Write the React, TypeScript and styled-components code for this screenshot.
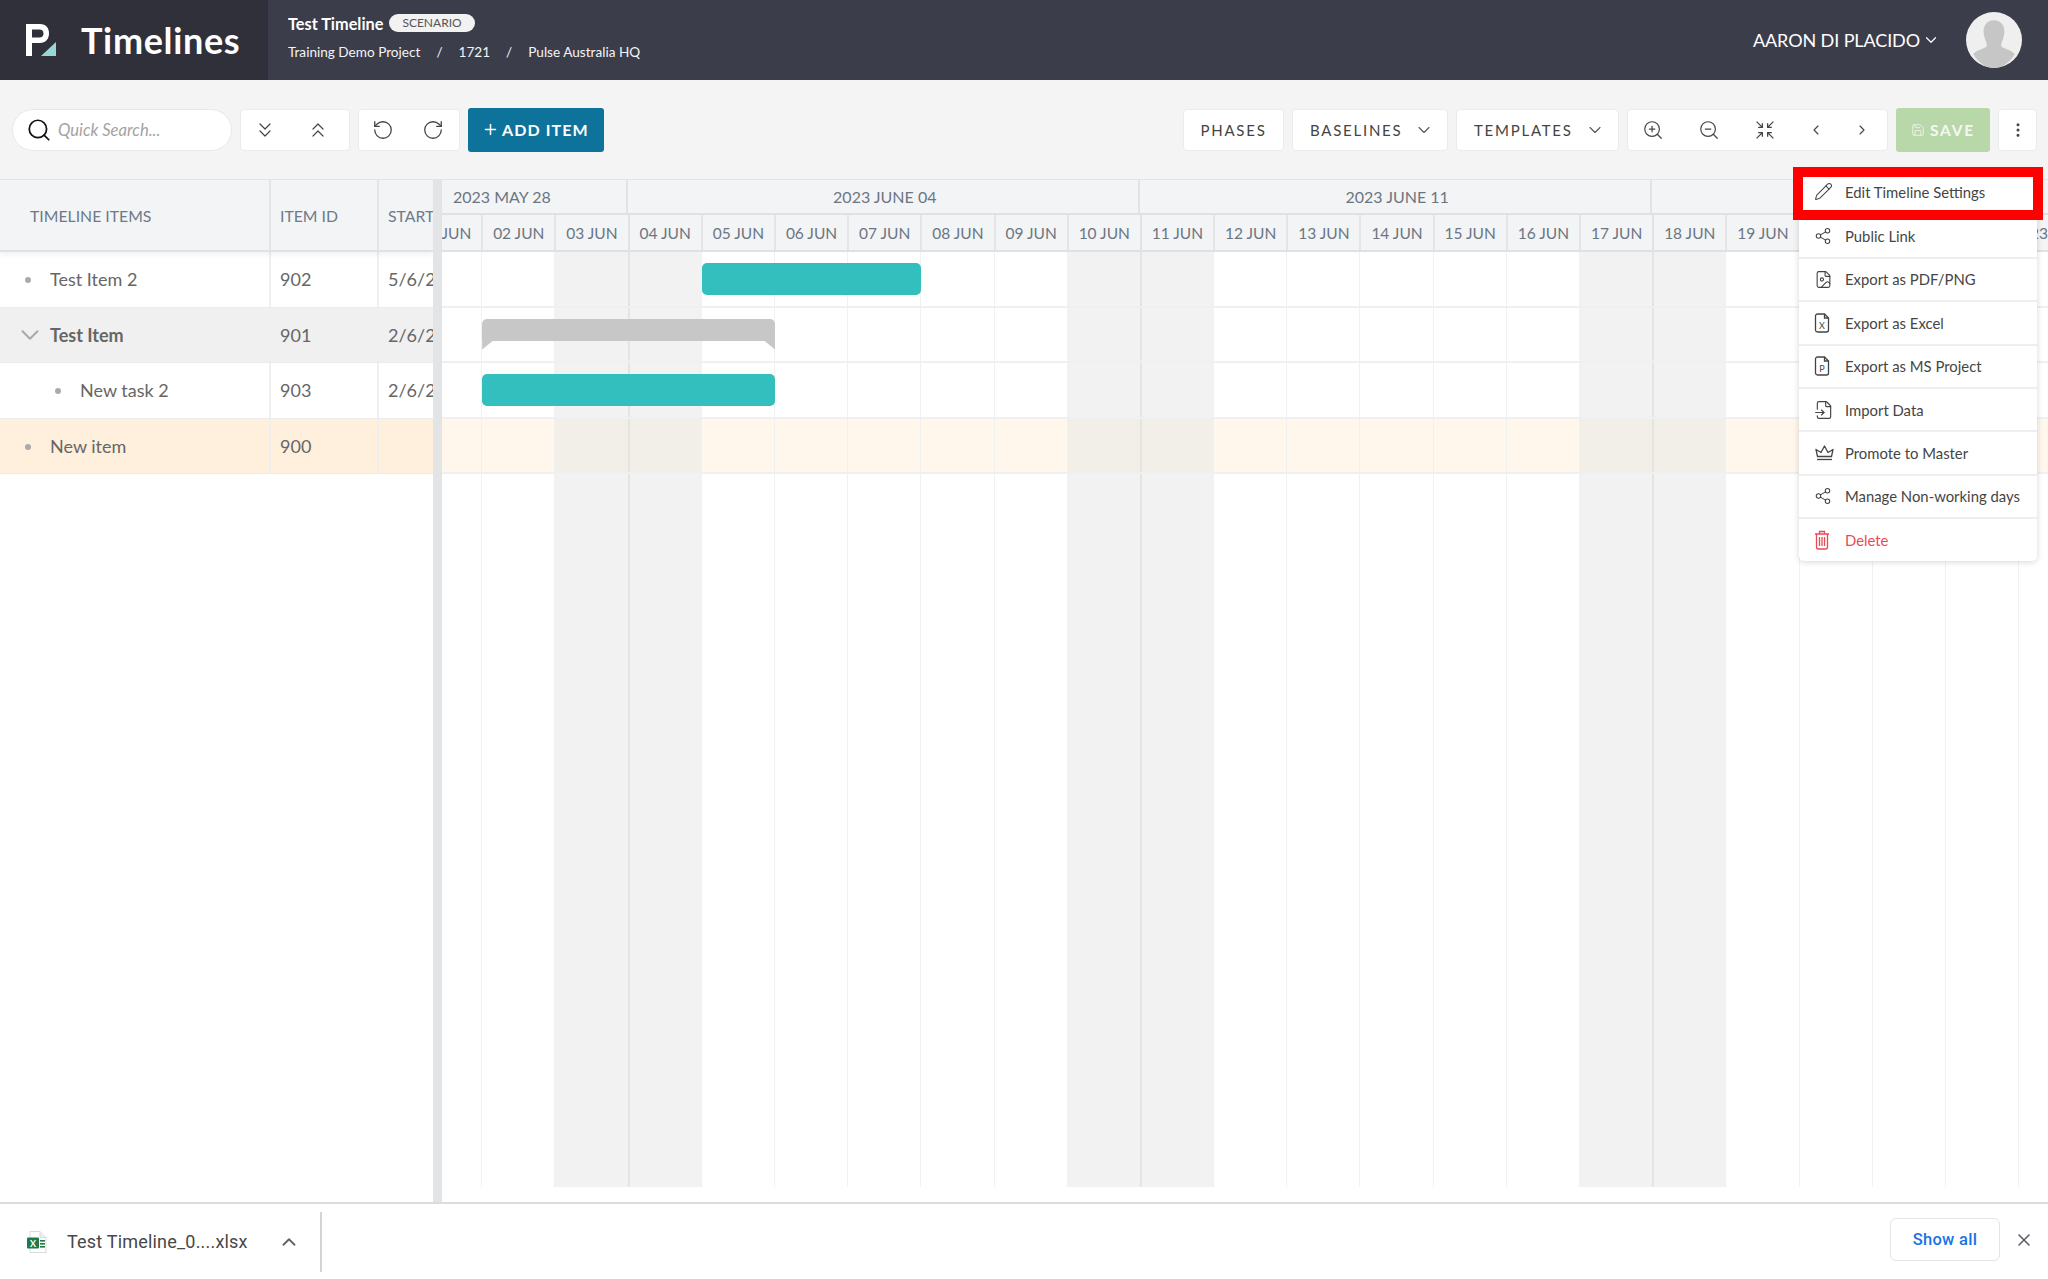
import React from "react";
import styled, { createGlobalStyle } from "styled-components";
import {
  Search, ChevronsDown, ChevronsUp, RotateCcw, RotateCw, Plus, ChevronDown, ChevronUp,
  ZoomIn, ZoomOut, ChevronLeft, ChevronRight, Save, MoreVertical, Pencil, Share2, FileImage, FileInput, X,
} from "lucide-react";

const DAY = 73.2;

const Global = createGlobalStyle`
  html, body { margin: 0; padding: 0; background: #fff; }
  body { font-family: Lato, "Liberation Sans", sans-serif; }
  * { box-sizing: border-box; }
`;

const Page = styled.div`
  position: relative;
  width: 2048px;
  height: 1279px;
  overflow: hidden;
  display: flex;
  flex-direction: column;
  background: #fff;
`;

/* ---------- header ---------- */
const Header = styled.header`
  height: 80px;
  flex: none;
  display: flex;
  align-items: stretch;
  background: #3b3d4b;
  color: #fff;
`;
const Brand = styled.div`
  width: 268px;
  background: #2f303a;
  display: flex;
  align-items: center;
  padding-left: 25px;
  gap: 24px;
`;
const BrandName = styled.div`
  font-size: 36px;
  font-weight: 700;
  letter-spacing: 0.65px;
  line-height: 1;
`;
const Titles = styled.div`
  padding: 14px 0 0 20px;
  display: flex;
  flex-direction: column;
  gap: 12px;
`;
const TitleRow = styled.div`
  display: flex;
  align-items: center;
  gap: 6px;
  height: 18px;
`;
const Title = styled.div`
  font-size: 16.300px;
  font-weight: 700;
`;
const Pill = styled.div`
  background: #f2f2f2;
  color: #555;
  border-radius: 9px;
  height: 18px;
  line-height: 18px;
  padding: 0 13px;
  font-size: 12px;
`;
const Crumbs = styled.div`
  display: flex;
  font-size: 13.600px;
  gap: 16px;
  color: #f4f4f4;
`;
const User = styled.div`
  margin-left: auto;
  display: flex;
  align-items: center;
  padding-right: 26px;
`;
const UserName = styled.div`
  font-size: 18px;
  letter-spacing: -0.1px;
  margin-right: 2px;
`;
const Avatar = styled.svg`
  width: 56px;
  height: 56px;
  margin-left: 26px;
`;

/* ---------- toolbar ---------- */
const Toolbar = styled.div`
  height: 99px;
  flex: none;
  background: #f4f4f4;
  display: flex;
  align-items: center;
  justify-content: space-between;
  padding: 0 11px 0 12px;
`;
const ToolGroup = styled.div`
  display: flex;
  align-items: center;
  gap: 8px;
`;
const SearchBox = styled.div`
  width: 220px;
  height: 42px;
  background: #fff;
  border: 1px solid #e9e9e9;
  border-radius: 21px;
  display: flex;
  align-items: center;
  padding-left: 13px;
  gap: 6px;
  color: #111;
`;
const SearchText = styled.span`
  font-size: 16.600px;
  font-style: italic;
  color: #a3a3a3;
`;
const ToolBox = styled.div<{ $w: number; $pad?: number }>`
  width: ${(p) => p.$w}px;
  height: 42px;
  background: #fff;
  border: 1px solid #ebebeb;
  border-radius: 4px;
  display: flex;
  align-items: center;
  justify-content: ${(p) => (p.$pad ? "flex-start" : "center")};
  padding-left: ${(p) => p.$pad ?? 0}px;
  color: #444;
  font-size: 15px;
  letter-spacing: 1.75px;
`;
const IconSpot = styled.span<{ $at: number }>`
  position: absolute;
  left: ${(p) => p.$at}px;
  top: 50%;
  transform: translate(-50%, -50%);
  display: flex;
`;
const IconBox = styled(ToolBox)`
  position: relative;
`;
const AddButton = styled.div`
  width: 136px;
  height: 44px;
  background: #0d739b;
  border-radius: 3px;
  color: #fff;
  font-size: 16px;
  font-weight: 700;
  letter-spacing: 1.1px;
  display: flex;
  align-items: center;
  padding-left: 14px;
  gap: 3px;
`;
const SaveButton = styled.div`
  width: 94px;
  height: 44px;
  background: #b9d8a9;
  border-radius: 3px;
  color: #f4f8f1;
  font-size: 15.500px;
  font-weight: 700;
  letter-spacing: 1.800px;
  display: flex;
  align-items: center;
  padding-left: 15px;
  gap: 5px;
`;
const Caret = styled.span`
  display: flex;
  margin-left: 12px;
  color: #555;
`;

/* ---------- main ---------- */
const Main = styled.div`
  flex: 1;
  min-height: 0;
  display: flex;
  border-top: 1px solid #e4e4e4;
`;
const LeftPanel = styled.div`
  width: 433px;
  flex: none;
  overflow: hidden;
`;
const Splitter = styled.div`
  width: 9px;
  flex: none;
  background: #e3e4e6;
`;
const LeftHead = styled.div`
  height: 72px;
  display: flex;
  background: #f3f4f5;
  border-bottom: 2px solid #e0e1e3;
  box-shadow: 0 3px 5px rgba(0, 0, 0, 0.05);
  position: relative;
  color: #6c7a8a;
  font-size: 15.800px;
`;
const HeadCell = styled.div<{ $w: number; $pl: number }>`
  width: ${(p) => p.$w}px;
  flex: none;
  padding-left: ${(p) => p.$pl}px;
  display: flex;
  align-items: center;
  border-right: 2px solid #e4e5e7;
  white-space: nowrap;
  overflow: hidden;
`;
const LeftRow = styled.div<{ $bg: string }>`
  height: 55.500px;
  display: flex;
  background: ${(p) => p.$bg};
  border-bottom: 1px solid #ececec;
  color: #666;
  font-size: 18px;
`;
const NameCell = styled.div<{ $indent: number; $bold?: boolean }>`
  width: 271px;
  flex: none;
  display: flex;
  align-items: center;
  border-right: 2px solid #efefef;
  padding-left: ${(p) => p.$indent}px;
  font-weight: ${(p) => (p.$bold ? 700 : 400)};
`;
const Bullet = styled.span`
  width: 6px;
  height: 6px;
  border-radius: 50%;
  background: #aaa;
  margin-right: 19px;
  position: relative;
  top: 1px;
`;
const Toggle = styled.span`
  display: flex;
  margin-left: -10.500px;
  margin-right: 5.500px;
  color: #a8a8a8;
`;
const ValueCell = styled.div<{ $w: number; $pl: number }>`
  width: ${(p) => p.$w}px;
  flex: none;
  padding-left: ${(p) => p.$pl}px;
  display: flex;
  align-items: center;
  white-space: nowrap;
  overflow: hidden;
  border-right: 2px solid #efefef;
`;

const Calendar = styled.div`
  flex: 1;
  min-width: 0;
  overflow: hidden;
  display: flex;
  flex-direction: column;
`;
const Track = styled.div`
  margin-left: -34px;
  width: ${23 * DAY}px;
  flex: 1;
  display: flex;
  flex-direction: column;
  padding-bottom: 15px;
`;
const WeekRow = styled.div`
  height: 35px;
  flex: none;
  display: flex;
  background: #f3f4f5;
  border-bottom: 2px solid #e0e1e3;
  color: #6b7683;
  font-size: 16px;
`;
const WeekCell = styled.div<{ $days: number; $left?: number }>`
  width: ${(p) => p.$days * DAY}px;
  flex: none;
  border-right: 2px solid #e2e3e5;
  display: flex;
  align-items: center;
  justify-content: ${(p) => (p.$left ? "flex-start" : "center")};
  padding-left: ${(p) => p.$left ?? 4}px;
`;
const DayRow = styled.div`
  height: 37px;
  flex: none;
  display: flex;
  background: #f3f4f5;
  border-bottom: 2px solid #e0e1e3;
  box-shadow: 0 3px 5px rgba(0, 0, 0, 0.05);
  position: relative;
  color: #6b7683;
  font-size: 15.500px;
`;
const DayHead = styled.div<{ $week: boolean }>`
  width: ${DAY}px;
  flex: none;
  display: flex;
  align-items: center;
  justify-content: center;
  border-left: ${(p) => (p.$week ? "2px solid #e2e3e5" : "2px solid #e4e5e7")};
  white-space: nowrap;
`;
const GridRow = styled.div<{ $bg?: string; $fill?: boolean }>`
  position: relative;
  display: flex;
  height: ${(p) => (p.$fill ? "auto" : "55.5px")};
  flex: ${(p) => (p.$fill ? 1 : "none")};
  background: ${(p) => p.$bg ?? "#fff"};
  border-bottom: ${(p) => (p.$fill ? "none" : "2px solid #f0f0f0")};
`;
const GridCell = styled.div<{ $week: boolean; $shade: string }>`
  width: ${DAY}px;
  flex: none;
  border-left: ${(p) => (p.$week ? "2px solid #e4e4e4" : "1px solid #f1f1f1")};
  background: ${(p) => p.$shade};
`;
const Bar = styled.div`
  position: absolute;
  top: 11px;
  height: 32px;
  border-radius: 5px;
  background: #33bfbd;
`;
const SummaryBar = styled.div`
  position: absolute;
  top: 11px;
  height: 22px;
  border-radius: 5px 5px 0 0;
  background: #c7c7c7;
  &::before,
  &::after {
    content: "";
    position: absolute;
    top: 22px;
    width: 11px;
    height: 9px;
    background: #c7c7c7;
  }
  &::before {
    left: 0;
    clip-path: polygon(0 0, 100% 0, 0 100%);
  }
  &::after {
    right: 0;
    clip-path: polygon(0 0, 100% 0, 100% 100%);
  }
`;

/* ---------- overflow menu ---------- */
const Menu = styled.div`
  position: absolute;
  top: 170px;
  right: 11px;
  width: 238px;
  background: #fff;
  border-radius: 5px;
  box-shadow: 0 1px 6px rgba(0, 0, 0, 0.16);
`;
const MenuItem = styled.div<{ $danger?: boolean; $first?: boolean }>`
  height: 43.400px;
  display: flex;
  align-items: center;
  padding-left: 15px;
  font-size: 14.850px;
  color: ${(p) => (p.$danger ? "#ea4a54" : "#454545")};
  border-top: ${(p) => (p.$first ? "none" : "2px solid #eeeeee")};
`;
const MenuIcon = styled.span`
  width: 31px;
  flex: none;
  display: flex;
  align-items: center;
`;
const RedMark = styled.div`
  position: absolute;
  top: 167px;
  left: 1793px;
  width: 250px;
  height: 53px;
  border: 10.500px solid #fe0000;
`;

/* ---------- download bar ---------- */
const DownloadBar = styled.div`
  height: 77px;
  flex: none;
  border-top: 2px solid #dcdcdc;
  display: flex;
  align-items: center;
  background: #fff;
  padding-left: 27px;
  font-family: Roboto, "Liberation Sans", sans-serif;
`;
const FileName = styled.div`
  font-size: 18px;
  color: #474747;
  letter-spacing: 0.2px;
  margin-left: 20px;
  width: 211px;
`;
const Arrow = styled.span`
  display: flex;
  color: #5f6368;
`;
const VLine = styled.div`
  width: 2px;
  height: 60px;
  background: #d4d4d4;
  margin-left: 20px;
`;
const ShowAll = styled.div`
  margin-left: auto;
  width: 110px;
  height: 43px;
  border: 1px solid #e2e4e8;
  border-radius: 6px;
  color: #1a73e8;
  font-size: 16.500px;
  font-weight: 500;
  letter-spacing: 0.3px;
  display: flex;
  align-items: center;
  justify-content: center;
  position: relative;
  top: -2px;
`;
const Close = styled.span`
  display: flex;
  margin: 0 14px 0 14px;
  color: #5f6368;
  position: relative;
  top: -2px;
`;

const days = Array.from({ length: 23 }, (_, i) => i + 1);
const isWeek = (d: number) => (d - 4) % 7 === 0;
const isOff = (d: number) => (d - 3) % 7 === 0 || (d - 4) % 7 === 0;
const barLeft = (d: number) => (d - 1) * DAY + 1;
const hiddenByMenu = (d: number) => d >= 20 && d <= 22;

const rows = [
  { name: "Test Item 2", id: "902", start: "5/6/2023", bg: "#fff", grid: "#fff", shade: "#f2f2f2", indent: 25, bar: { from: 5, n: 3 } },
  { name: "Test Item", id: "901", start: "2/6/2023", bg: "#f0f0f0", grid: "#fff", shade: "#f2f2f2", indent: 25, group: true, summary: { from: 2, n: 4 } },
  { name: "New task 2", id: "903", start: "2/6/2023", bg: "#fff", grid: "#fff", shade: "#f2f2f2", indent: 55, bar: { from: 2, n: 4 } },
  { name: "New item", id: "900", start: "", bg: "#ffefdd", grid: "#fff6ec", shade: "#f2eee8", indent: 25 },
];

const cells = (shade: string) =>
  days.map((d) => <GridCell key={d} $week={isWeek(d)} $shade={isOff(d) ? shade : "transparent"} />);

const PulseLogo = () => (
  <svg width="32" height="34" viewBox="0 0 32 34">
    <path d="M1 1h14c6 0 9 4 9 9.500S20.500 20 15 20H7v13H1z M7 6.500v8h7.500c2.500 0 4-1.500 4-4s-1.500-4-4-4z" fill="#fff" fillRule="evenodd" />
    <path d="M31 19v14H16z" fill="#97d8d5" />
  </svg>
);

const FitIcon = () => (
  <svg width="21" height="21" viewBox="0 0 20 20" fill="none" stroke="#444" strokeWidth="1.200">
    <path d="M2 2l5.500 5.500M7.500 3.500v4h-4" />
    <path d="M18 2l-5.500 5.500M12.500 3.500v4h4" />
    <path d="M2 18l5.500-5.500M7.500 16.500v-4h-4" />
    <path d="M18 18l-5.500-5.500M12.500 16.500v-4h4" />
  </svg>
);

const LetterFile = ({ letter }: { letter: string }) => (
  <svg width="16" height="20" viewBox="0 0 16 20" fill="none" stroke="#444" strokeWidth="1.300">
    <path d="M1.500 3a2 2 0 0 1 2-2h7l4 4v12a2 2 0 0 1-2 2h-9a2 2 0 0 1-2-2z" />
    <path d="M10.500 1v4h4" />
    <text x="8" y="15.500" textAnchor="middle" fontSize="9" fill="#444" stroke="none" fontFamily="Lato, sans-serif">{letter}</text>
  </svg>
);

const CrownIcon = () => (
  <svg width="21" height="18" viewBox="0 0 21 18" fill="none" stroke="#444" strokeWidth="1.300" strokeLinejoin="round">
    <path d="M3.500 12.500L2 5.500l5 3L10.500 2 14 8.500l5-3-1.500 7z" />
    <path d="M3 15.500h15" />
  </svg>
);

const TrashIcon = () => (
  <svg width="16" height="20" viewBox="0 0 16 20" fill="none" stroke="#ea4a54" strokeWidth="1.300">
    <path d="M1 4h14M5.500 4V1.500h5V4M2.500 4v13a2 2 0 0 0 2 2h7a2 2 0 0 0 2-2V4" />
    <path d="M5.500 7v9M8 7v9M10.500 7v9" />
  </svg>
);

const ExcelIcon = () => (
  <svg width="20" height="22" viewBox="0 0 20 22">
    <path d="M3 .5h10l6 6V21.500H3z" fill="#fff" stroke="#d9d9d9" />
    <path d="M13 .5v6h6" fill="#eee" stroke="#d9d9d9" />
    <rect x="13" y="9" width="5" height="1.600" fill="#1f7a45" />
    <rect x="13" y="12" width="5" height="1.600" fill="#1f7a45" />
    <rect x="13" y="15" width="5" height="1.600" fill="#1f7a45" />
    <rect x="0" y="6.500" width="12" height="11" rx="1" fill="#1f7a45" />
    <text x="6" y="15.500" textAnchor="middle" fontSize="9" fontWeight="700" fill="#fff" fontFamily="Lato, sans-serif">X</text>
  </svg>
);

export default function App() {
  return (
    <Page>
      <Global />
      <Header>
        <Brand>
          <PulseLogo />
          <BrandName>Timelines</BrandName>
        </Brand>
        <Titles>
          <TitleRow>
            <Title>Test Timeline</Title>
            <Pill>SCENARIO</Pill>
          </TitleRow>
          <Crumbs>
            <span>Training Demo Project</span>
            <span>/</span>
            <span>1721</span>
            <span>/</span>
            <span>Pulse Australia HQ</span>
          </Crumbs>
        </Titles>
        <User>
          <UserName>AARON DI PLACIDO</UserName>
          <ChevronDown size={18} strokeWidth={1.6} />
          <Avatar viewBox="0 0 54 54">
            <circle cx="27" cy="27" r="27" fill="#efefef" />
            <path d="M27 8c7 0 10.500 5.500 10 12-.3 4-2 8-3 10.500-.5 2 .5 3.500 3 4.500 4 1.500 8 3 10 5.500C42 49 35 54 27 54S12 49 7 40.500c2-2.500 6-4 10-5.500 2.500-1 3.500-2.500 3-4.500-1-2.500-2.700-6.500-3-10.500-.5-6.500 3-12 10-12z" fill="#c6c6c6" />
          </Avatar>
        </User>
      </Header>

      <Toolbar>
        <ToolGroup>
          <SearchBox>
            <Search size={26} strokeWidth={1.6} />
            <SearchText>Quick Search...</SearchText>
          </SearchBox>
          <IconBox $w={110}>
            <IconSpot $at={24}><ChevronsDown size={24} strokeWidth={1.2} /></IconSpot>
            <IconSpot $at={77}><ChevronsUp size={24} strokeWidth={1.2} /></IconSpot>
          </IconBox>
          <IconBox $w={102}>
            <IconSpot $at={24}><RotateCcw size={22} strokeWidth={1.4} /></IconSpot>
            <IconSpot $at={74}><RotateCw size={22} strokeWidth={1.4} /></IconSpot>
          </IconBox>
          <AddButton>
            <Plus size={17} strokeWidth={2.2} />
            ADD ITEM
          </AddButton>
        </ToolGroup>
        <ToolGroup>
          <ToolBox $w={101}>PHASES</ToolBox>
          <ToolBox $w={156} $pad={17}>
            BASELINES
            <Caret><ChevronDown size={20} strokeWidth={1.3} /></Caret>
          </ToolBox>
          <ToolBox $w={163} $pad={17}>
            TEMPLATES
            <Caret><ChevronDown size={20} strokeWidth={1.3} /></Caret>
          </ToolBox>
          <IconBox $w={261}>
            <IconSpot $at={25}><ZoomIn size={22} strokeWidth={1.3} /></IconSpot>
            <IconSpot $at={81}><ZoomOut size={22} strokeWidth={1.3} /></IconSpot>
            <IconSpot $at={137}><FitIcon /></IconSpot>
            <IconSpot $at={188}><ChevronLeft size={16} strokeWidth={1.7} /></IconSpot>
            <IconSpot $at={234}><ChevronRight size={16} strokeWidth={1.7} /></IconSpot>
          </IconBox>
          <SaveButton>
            <Save size={14} strokeWidth={1.4} />
            SAVE
          </SaveButton>
          <ToolBox $w={39}><MoreVertical size={18} strokeWidth={2} /></ToolBox>
        </ToolGroup>
      </Toolbar>

      <Main>
        <LeftPanel>
          <LeftHead>
            <HeadCell $w={271} $pl={30}>TIMELINE ITEMS</HeadCell>
            <HeadCell $w={108} $pl={9}>ITEM ID</HeadCell>
            <HeadCell $w={60} $pl={9}>START</HeadCell>
          </LeftHead>
          {rows.map((r) => (
            <LeftRow key={r.id} $bg={r.bg}>
              <NameCell $indent={r.indent} $bold={r.group}>
                {r.group ? (
                  <Toggle><ChevronDown size={30} strokeWidth={1.6} /></Toggle>
                ) : (
                  <Bullet />
                )}
                {r.name}
              </NameCell>
              <ValueCell $w={108} $pl={9}>{r.id}</ValueCell>
              <ValueCell $w={60} $pl={9}>{r.start}</ValueCell>
            </LeftRow>
          ))}
        </LeftPanel>
        <Splitter />
        <Calendar>
          <Track>
            <WeekRow>
              <WeekCell $days={3} $left={45}>2023 MAY 28</WeekCell>
              <WeekCell $days={7}>2023 JUNE 04</WeekCell>
              <WeekCell $days={7}>2023 JUNE 11</WeekCell>
              <WeekCell $days={6} />
            </WeekRow>
            <DayRow>
              {days.map((d) => (
                <DayHead key={d} $week={isWeek(d)}>
                  {hiddenByMenu(d) ? "" : `${String(d).padStart(2, "0")} JUN`}
                </DayHead>
              ))}
            </DayRow>
            {rows.map((r) => (
              <GridRow key={r.id} $bg={r.grid}>
                {cells(r.shade)}
                {r.bar && <Bar style={{ left: barLeft(r.bar.from), width: r.bar.n * DAY }} />}
                {r.summary && <SummaryBar style={{ left: barLeft(r.summary.from), width: r.summary.n * DAY }} />}
              </GridRow>
            ))}
            <GridRow $fill>{cells("#f2f2f2")}</GridRow>
          </Track>
        </Calendar>
      </Main>

      <DownloadBar>
        <ExcelIcon />
        <FileName>Test Timeline_0....xlsx</FileName>
        <Arrow><ChevronUp size={22} strokeWidth={2} /></Arrow>
        <VLine />
        <ShowAll>Show all</ShowAll>
        <Close><X size={20} strokeWidth={2} /></Close>
      </DownloadBar>

      <Menu>
        <MenuItem $first><MenuIcon><Pencil size={19} strokeWidth={1.3} color="#444" /></MenuIcon>Edit Timeline Settings</MenuItem>
        <MenuItem><MenuIcon><Share2 size={18} strokeWidth={1.4} color="#444" /></MenuIcon>Public Link</MenuItem>
        <MenuItem><MenuIcon><FileImage size={19} strokeWidth={1.4} color="#444" /></MenuIcon>Export as PDF/PNG</MenuItem>
        <MenuItem><MenuIcon><LetterFile letter="X" /></MenuIcon>Export as Excel</MenuItem>
        <MenuItem><MenuIcon><LetterFile letter="P" /></MenuIcon>Export as MS Project</MenuItem>
        <MenuItem><MenuIcon><FileInput size={20} strokeWidth={1.4} color="#444" /></MenuIcon>Import Data</MenuItem>
        <MenuItem><MenuIcon><CrownIcon /></MenuIcon>Promote to Master</MenuItem>
        <MenuItem><MenuIcon><Share2 size={18} strokeWidth={1.4} color="#444" /></MenuIcon>Manage Non-working days</MenuItem>
        <MenuItem $danger><MenuIcon><TrashIcon /></MenuIcon>Delete</MenuItem>
      </Menu>
      <RedMark />
    </Page>
  );
}
